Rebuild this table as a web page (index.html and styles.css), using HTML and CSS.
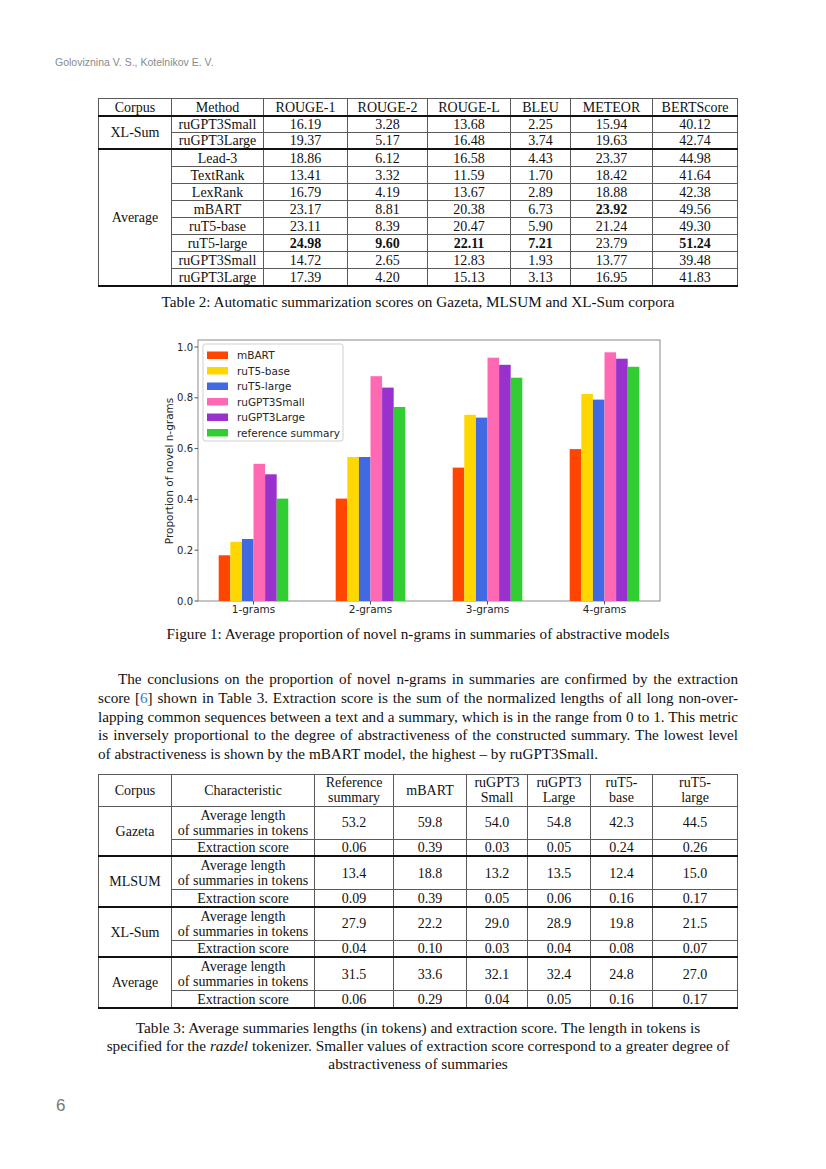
FILE: index.html
```html
<!DOCTYPE html>
<html>
<head>
<meta charset="utf-8">
<link rel="stylesheet" href="styles.css">
</head>
<body>
<div class="page">
  <header class="running-head">Goloviznina V. S., Kotelnikov E. V.</header>

  <main class="content">
    <table class="tbl tbl2">
      <colgroup>
        <col style="width:73px"><col style="width:92px"><col style="width:84px"><col style="width:80px"><col style="width:83px"><col style="width:60px"><col style="width:82px"><col>
      </colgroup>
      <thead>
        <tr><th>Corpus</th><th>Method</th><th>ROUGE-1</th><th>ROUGE-2</th><th>ROUGE-L</th><th>BLEU</th><th>METEOR</th><th>BERTScore</th></tr>
      </thead>
      <tbody class="group first-group">
        <tr><td rowspan="2">XL-Sum</td><td>ruGPT3Small</td><td>16.19</td><td>3.28</td><td>13.68</td><td>2.25</td><td>15.94</td><td>40.12</td></tr>
        <tr><td>ruGPT3Large</td><td>19.37</td><td>5.17</td><td>16.48</td><td>3.74</td><td>19.63</td><td>42.74</td></tr>
      </tbody>
      <tbody class="group">
        <tr><td rowspan="8">Average</td><td>Lead-3</td><td>18.86</td><td>6.12</td><td>16.58</td><td>4.43</td><td>23.37</td><td>44.98</td></tr>
        <tr><td>TextRank</td><td>13.41</td><td>3.32</td><td>11.59</td><td>1.70</td><td>18.42</td><td>41.64</td></tr>
        <tr><td>LexRank</td><td>16.79</td><td>4.19</td><td>13.67</td><td>2.89</td><td>18.88</td><td>42.38</td></tr>
        <tr><td>mBART</td><td>23.17</td><td>8.81</td><td>20.38</td><td>6.73</td><td class="b">23.92</td><td>49.56</td></tr>
        <tr><td>ruT5-base</td><td>23.11</td><td>8.39</td><td>20.47</td><td>5.90</td><td>21.24</td><td>49.30</td></tr>
        <tr><td>ruT5-large</td><td class="b">24.98</td><td class="b">9.60</td><td class="b">22.11</td><td class="b">7.21</td><td>23.79</td><td class="b">51.24</td></tr>
        <tr><td>ruGPT3Small</td><td>14.72</td><td>2.65</td><td>12.83</td><td>1.93</td><td>13.77</td><td>39.48</td></tr>
        <tr><td>ruGPT3Large</td><td>17.39</td><td>4.20</td><td>15.13</td><td>3.13</td><td>16.95</td><td>41.83</td></tr>
      </tbody>
    </table>
    <p class="caption cap2">Table 2: Automatic summarization scores on Gazeta, MLSUM and XL-Sum corpora</p>

    <figure class="figure">
      <svg class="chart" width="520" height="290" viewBox="0 0 520 290" xmlns="http://www.w3.org/2000/svg" font-family="DejaVu Sans, sans-serif">
        <rect x="48" y="9" width="462" height="261" fill="#fff" stroke="#8a8a8a" stroke-width="1"/>
        <!-- 1-grams -->
        <g>
          <rect x="68.7" y="224.3" width="11.6" height="45.7" fill="#ff4500"/>
          <rect x="80.3" y="210.8" width="11.6" height="59.2" fill="#ffd700"/>
          <rect x="91.9" y="208.0" width="11.6" height="62.0" fill="#4169e1"/>
          <rect x="103.5" y="132.8" width="11.6" height="137.2" fill="#ff69b4"/>
          <rect x="115.1" y="143.3" width="11.6" height="126.7" fill="#9932cc"/>
          <rect x="126.7" y="167.6" width="11.6" height="102.4" fill="#32cd32"/>
        </g>
        <!-- 2-grams -->
        <g>
          <rect x="185.7" y="167.6" width="11.6" height="102.4" fill="#ff4500"/>
          <rect x="197.3" y="126.0" width="11.6" height="144.0" fill="#ffd700"/>
          <rect x="208.9" y="126.0" width="11.6" height="144.0" fill="#4169e1"/>
          <rect x="220.5" y="45.2" width="11.6" height="224.8" fill="#ff69b4"/>
          <rect x="232.1" y="56.6" width="11.6" height="213.4" fill="#9932cc"/>
          <rect x="243.7" y="76.0" width="11.6" height="194.0" fill="#32cd32"/>
        </g>
        <!-- 3-grams -->
        <g>
          <rect x="302.7" y="136.6" width="11.6" height="133.4" fill="#ff4500"/>
          <rect x="314.3" y="83.8" width="11.6" height="186.2" fill="#ffd700"/>
          <rect x="325.9" y="86.6" width="11.6" height="183.4" fill="#4169e1"/>
          <rect x="337.5" y="26.7" width="11.6" height="243.3" fill="#ff69b4"/>
          <rect x="349.1" y="33.8" width="11.6" height="236.2" fill="#9932cc"/>
          <rect x="360.7" y="46.7" width="11.6" height="223.3" fill="#32cd32"/>
        </g>
        <!-- 4-grams -->
        <g>
          <rect x="419.7" y="118.1" width="11.6" height="151.9" fill="#ff4500"/>
          <rect x="431.3" y="63.0" width="11.6" height="207.0" fill="#ffd700"/>
          <rect x="442.9" y="68.6" width="11.6" height="201.4" fill="#4169e1"/>
          <rect x="454.5" y="21.3" width="11.6" height="248.7" fill="#ff69b4"/>
          <rect x="466.1" y="27.7" width="11.6" height="242.3" fill="#9932cc"/>
          <rect x="477.7" y="35.8" width="11.6" height="234.2" fill="#32cd32"/>
        </g>
        <!-- ticks -->
        <g stroke="#555" stroke-width="1">
          <line x1="44.5" y1="270" x2="48" y2="270"/>
          <line x1="44.5" y1="219.2" x2="48" y2="219.2"/>
          <line x1="44.5" y1="168.4" x2="48" y2="168.4"/>
          <line x1="44.5" y1="117.6" x2="48" y2="117.6"/>
          <line x1="44.5" y1="66.8" x2="48" y2="66.8"/>
          <line x1="44.5" y1="16" x2="48" y2="16"/>
          <line x1="103.5" y1="270" x2="103.5" y2="273.5"/>
          <line x1="220.5" y1="270" x2="220.5" y2="273.5"/>
          <line x1="337.5" y1="270" x2="337.5" y2="273.5"/>
          <line x1="454.5" y1="270" x2="454.5" y2="273.5"/>
        </g>
        <g font-size="10" fill="#262626" text-anchor="end">
          <text x="43" y="273.6">0.0</text>
          <text x="43" y="222.8">0.2</text>
          <text x="43" y="172">0.4</text>
          <text x="43" y="121.2">0.6</text>
          <text x="43" y="70.4">0.8</text>
          <text x="43" y="19.6">1.0</text>
        </g>
        <g font-size="10.5" fill="#262626" text-anchor="middle">
          <text x="103.5" y="281.5">1-grams</text>
          <text x="220.5" y="281.5">2-grams</text>
          <text x="337.5" y="281.5">3-grams</text>
          <text x="454.5" y="281.5">4-grams</text>
        </g>
        <text x="0" y="0" font-size="10.5" fill="#262626" text-anchor="middle" transform="translate(23 140) rotate(-90)">Proportion of novel n-grams</text>
        <!-- legend -->
        <rect x="53" y="13" width="140" height="97" rx="2" fill="#fff" fill-opacity="0.85" stroke="#d0d0d0"/>
        <g font-size="10.5" fill="#262626">
          <rect x="57" y="20.5" width="21" height="7.5" fill="#ff4500"/><text x="87" y="28">mBART</text>
          <rect x="57" y="36" width="21" height="7.5" fill="#ffd700"/><text x="87" y="43.5">ruT5-base</text>
          <rect x="57" y="51.5" width="21" height="7.5" fill="#4169e1"/><text x="87" y="59">ruT5-large</text>
          <rect x="57" y="67" width="21" height="7.5" fill="#ff69b4"/><text x="87" y="74.5">ruGPT3Small</text>
          <rect x="57" y="82.5" width="21" height="7.5" fill="#9932cc"/><text x="87" y="90">ruGPT3Large</text>
          <rect x="57" y="98" width="21" height="7.5" fill="#32cd32"/><text x="87" y="105.5">reference summary</text>
        </g>
      </svg>
      <figcaption class="caption cap-fig">Figure 1: Average proportion of novel n-grams in summaries of abstractive models</figcaption>
    </figure>

    <p class="para">
      <span class="ln first">The conclusions on the proportion of novel n-grams in summaries are confirmed by the extraction</span>
      <span class="ln">score [<span class="ref">6</span>] shown in Table 3. Extraction score is the sum of the normalized lengths of all long non-over-</span>
      <span class="ln">lapping common sequences between a text and a summary, which is in the range from 0 to 1. This metric</span>
      <span class="ln">is inversely proportional to the degree of abstractiveness of the constructed summary. The lowest level</span>
      <span class="ln last">of abstractiveness is shown by the mBART model, the highest – by ruGPT3Small.</span>
    </p>

    <table class="tbl tbl3">
      <colgroup>
        <col style="width:73px"><col style="width:143px"><col style="width:79px"><col style="width:73px"><col style="width:61px"><col style="width:63px"><col style="width:62px"><col>
      </colgroup>
      <thead>
        <tr><th>Corpus</th><th>Characteristic</th><th>Reference<br>summary</th><th>mBART</th><th>ruGPT3<br>Small</th><th>ruGPT3<br>Large</th><th>ruT5-<br>base</th><th>ruT5-<br>large</th></tr>
      </thead>
      <tbody class="group">
        <tr class="tall"><td rowspan="2">Gazeta</td><td>Average length<br>of summaries in tokens</td><td>53.2</td><td>59.8</td><td>54.0</td><td>54.8</td><td>42.3</td><td>44.5</td></tr>
        <tr><td>Extraction score</td><td>0.06</td><td>0.39</td><td>0.03</td><td>0.05</td><td>0.24</td><td>0.26</td></tr>
      </tbody>
      <tbody class="group">
        <tr class="tall"><td rowspan="2">MLSUM</td><td>Average length<br>of summaries in tokens</td><td>13.4</td><td>18.8</td><td>13.2</td><td>13.5</td><td>12.4</td><td>15.0</td></tr>
        <tr><td>Extraction score</td><td>0.09</td><td>0.39</td><td>0.05</td><td>0.06</td><td>0.16</td><td>0.17</td></tr>
      </tbody>
      <tbody class="group">
        <tr class="tall"><td rowspan="2">XL-Sum</td><td>Average length<br>of summaries in tokens</td><td>27.9</td><td>22.2</td><td>29.0</td><td>28.9</td><td>19.8</td><td>21.5</td></tr>
        <tr><td>Extraction score</td><td>0.04</td><td>0.10</td><td>0.03</td><td>0.04</td><td>0.08</td><td>0.07</td></tr>
      </tbody>
      <tbody class="group">
        <tr class="tall"><td rowspan="2">Average</td><td>Average length<br>of summaries in tokens</td><td>31.5</td><td>33.6</td><td>32.1</td><td>32.4</td><td>24.8</td><td>27.0</td></tr>
        <tr><td>Extraction score</td><td>0.06</td><td>0.29</td><td>0.04</td><td>0.05</td><td>0.16</td><td>0.17</td></tr>
      </tbody>
    </table>
    <p class="caption cap3">Table 3: Average summaries lengths (in tokens) and extraction score. The length in tokens is<br>specified for the <i>razdel</i> tokenizer. Smaller values of extraction score correspond to a greater degree of<br>abstractiveness of summaries</p>
  </main>

  <footer class="page-num">6</footer>
</div>
</body>
</html>
```

FILE: styles.css
```css
html, body {
  margin: 0;
  padding: 0;
  background: #fff;
}

.page {
  width: 826px;
  height: 1169px;
  position: relative;
  box-sizing: border-box;
  padding-top: 55px;
}

.running-head {
  margin-left: 55px;
  font-family: "Liberation Sans", Arial, sans-serif;
  font-size: 10.5px;
  line-height: 14px;
  color: #8a8a8a;
}

.content {
  margin-left: 98px;
  width: 640px;
  margin-top: 29px;
  font-family: "Liberation Serif", "Times New Roman", serif;
  color: #111;
}

.tbl {
  width: 640px;
  border-collapse: collapse;
  table-layout: fixed;
  font-size: 14px;
  line-height: 15px;
  text-align: center;
}

.tbl th,
.tbl td {
  border: 1px solid #5a5a5a;
  padding: 0;
  font-weight: normal;
  vertical-align: middle;
}

.tbl td.b {
  font-weight: bold;
}

.tbl2 thead tr th {
  border-bottom: 2px solid #111;
  height: 16px;
}

.tbl2 td {
  height: 16px;
}

.tbl2 .first-group td {
  height: 15px;
}

.tbl .group {
  border-bottom: 2px solid #111;
}

.tbl3 th {
  height: 31px;
  line-height: 15px;
}

.tbl3 tr.tall td {
  height: 32px;
}

.tbl3 td {
  height: 15.5px;
}

.caption {
  margin: 0;
  text-align: center;
  font-size: 15.2px;
  line-height: 18px;
}

.cap2 {
  margin-top: 6px;
}

.figure {
  margin: 20px 0 0 0;
}

.chart {
  display: block;
  margin-left: 52px;
}

.cap-fig {
  margin-top: 4px;
}

.para {
  margin: 27px 0 0 0;
  font-size: 15.2px;
  line-height: 18.8px;
}

.para .ln {
  display: block;
  text-align: justify;
  text-align-last: justify;
  white-space: nowrap;
}

.para .ln.first {
  text-indent: 20px;
}

.para .ln.last {
  text-align-last: left;
}

.ref {
  color: #2f7bd0;
}

.tbl3 {
  margin-top: 10px;
}

.cap3 {
  margin-top: 10px;
  font-size: 15.3px;
}

.page-num {
  position: absolute;
  left: 56px;
  top: 1096px;
  font-family: "Liberation Sans", Arial, sans-serif;
  font-size: 17px;
  color: #777;
}
```
